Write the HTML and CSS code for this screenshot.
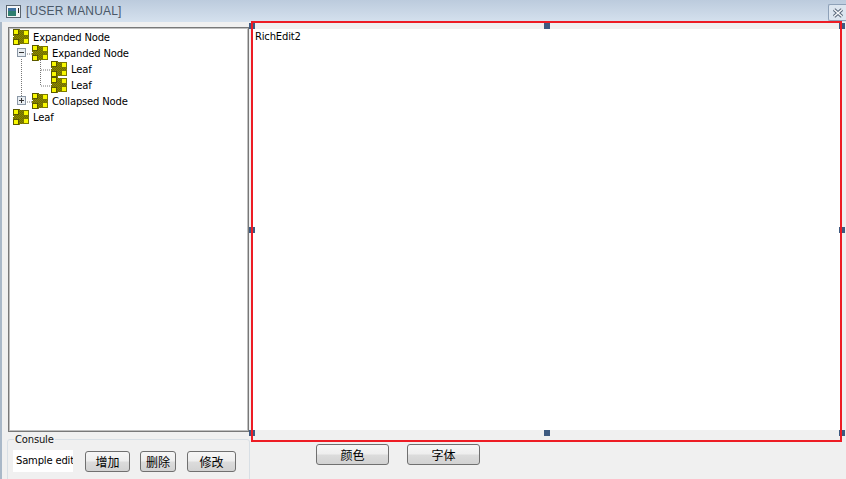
FILE: index.html
```html
<!DOCTYPE html>
<html lang="zh">
<head>
<meta charset="utf-8">
<title>[USER MANUAL]</title>
<link rel="stylesheet" href="styles.css">
</head>
<body>
<svg class="defs" width="0" height="0" aria-hidden="true">
  <defs>
    <pattern id="dither" width="2" height="2" patternUnits="userSpaceOnUse">
      <rect width="2" height="2" fill="#8c8800"/>
      <rect width="1" height="1" fill="#6e6c00"/>
      <rect x="1" y="1" width="1" height="1" fill="#6e6c00"/>
    </pattern>
    <symbol id="node" viewBox="0 0 16 16">
      <path d="M0 0h7v1h7v1h2v13H7v1H0V8h1V7H0z" fill="url(#dither)"/>
      <rect x="0.5" y="0.5" width="5" height="5" fill="#f8f800" stroke="#5a5800"/>
      <rect x="10.5" y="1.5" width="5" height="5" fill="#f8f800" stroke="#7a7800"/>
      <rect x="0.5" y="10.5" width="5" height="5" fill="#f8f800" stroke="#5a5800"/>
      <rect x="10.5" y="9.5" width="5" height="5" fill="#f8f800" stroke="#7a7800"/>
    </symbol>
  </defs>
</svg>
<div class="window">
  <header class="titlebar">
    <svg class="appicon" width="15" height="13" viewBox="0 0 15 13">
      <rect x="0.5" y="0.5" width="14" height="12" fill="#f4f6f8" stroke="#5a6570"/>
      <rect x="2" y="3" width="8" height="8" fill="#2f7f70"/>
      <rect x="2" y="3" width="8" height="3" fill="#3d6f9e"/>
      <rect x="12" y="3" width="1" height="5" fill="#222"/>
    </svg>
    <span class="title">[USER MANUAL]</span>
    <button class="close" type="button" aria-label="Close">
      <svg width="12" height="10" viewBox="0 0 12 10">
        <path d="M2 1.5l8 7M10 1.5l-8 7" stroke="#59677a" stroke-width="3.6" fill="none"/>
        <path d="M2 1.5l8 7M10 1.5l-8 7" stroke="#f6f8fa" stroke-width="1.6" fill="none"/>
      </svg>
    </button>
  </header>
  <div class="content">
    <aside class="left">
      <div class="tree">
        <svg class="guides" width="60" height="90" viewBox="0 0 60 90">
          <path d="M12.5 31V70M31.5 32V58M32 42h10M32 58h10M18 26h5M18 74h5" stroke="#777" stroke-dasharray="1 1" fill="none"/>
        </svg>
        <div class="node"><svg class="ic"><use href="#node"/></svg><span>Expanded Node</span></div>
        <div class="node lvl1">
          <span class="exp"><svg width="9" height="9" viewBox="0 0 9 9"><path d="M2 4.5h5" stroke="#333"/></svg></span>
          <svg class="ic"><use href="#node"/></svg><span>Expanded Node</span>
        </div>
        <div class="node lvl2"><svg class="ic"><use href="#node"/></svg><span>Leaf</span></div>
        <div class="node lvl2"><svg class="ic"><use href="#node"/></svg><span>Leaf</span></div>
        <div class="node lvl1">
          <span class="exp"><svg width="9" height="9" viewBox="0 0 9 9"><path d="M2 4.5h5M4.5 2v5" stroke="#333"/></svg></span>
          <svg class="ic"><use href="#node"/></svg><span>Collapsed Node</span>
        </div>
        <div class="node"><svg class="ic"><use href="#node"/></svg><span>Leaf</span></div>
      </div>
      <fieldset class="group">
        <legend>Consule</legend>
        <div class="edit">Sample edit</div>
        <button class="btn b1" type="button">增加</button>
        <button class="btn b2" type="button">删除</button>
        <button class="btn b3" type="button">修改</button>
      </fieldset>
    </aside>
    <main class="right">
      <div class="design">
        <div class="rich"><div class="richtop"></div><div class="richbody">RichEdit2</div><div class="richbot"></div></div>
        <i class="h tl"></i><i class="h tc"></i><i class="h tr"></i>
        <i class="h ml"></i><i class="h mr"></i>
        <i class="h bl"></i><i class="h bc"></i><i class="h br"></i>
      </div>
      <div class="actions">
        <button class="btn wide" type="button">颜色</button>
        <button class="btn wide" type="button">字体</button>
      </div>
    </main>
  </div>
</div>
</body>
</html>
```
FILE: styles.css
```css
html, body { margin: 0; padding: 0; height: 479px; overflow: hidden; background: #f0f0f0; }
body { font-family: "DejaVu Sans", "Noto Sans CJK SC", sans-serif; font-size: 10px; letter-spacing: -0.18px; color: #000; }
.defs { position: absolute; }
.window { height: 479px; display: flex; flex-direction: column; overflow: hidden; }
.titlebar {
  height: 22px; display: flex; align-items: center; padding: 0 0 0 6px; flex: none;
  background: linear-gradient(to bottom, #bccbdd, #d5e1ee);
}
.appicon { flex: none; }
.title { margin-left: 5px; font: 12px "Liberation Sans", sans-serif; letter-spacing: 0.17px; color: #4a5868; }
.close {
  margin-left: auto; width: 18px; height: 17px; align-self: flex-start; margin-top: 4px; padding: 0 0 0 3px;
  border: 1px solid #8ea1b8; border-right: 0; border-radius: 2px 0 0 2px;
  background: #dde6f0; display: flex; align-items: center; justify-content: flex-start; overflow: hidden;
}
.close svg { flex: none; }
.content { flex: 1; display: flex; min-height: 0; border-left: 2px solid #a9b8c8; }
.left { width: 249px; flex: none; padding: 5px 0 0 6px; box-sizing: border-box; }
.tree {
  position: relative; width: 241px; height: 405px; box-sizing: border-box;
  background: #fff; border: 1px solid #787878; outline: 1px solid #c0c0c0; outline-offset: -2px;
  padding: 1px 0 0 4px;
}
.guides { position: absolute; left: 0; top: 0; }
.node { height: 16px; display: flex; align-items: center; position: relative; white-space: nowrap; }
.ic { width: 16px; height: 16px; flex: none; margin-right: 4px; }
.lvl1 { padding-left: 19px; }
.lvl2 { padding-left: 38px; }
.exp {
  position: absolute; left: 4px; top: 3px; width: 9px; height: 9px; box-sizing: border-box;
  border: 1px solid #8a97a5; background: #e8edf2; display: block;
}
.exp svg { display: block; margin: -1px; }
.group {
  margin: 0 0 0 -1px; padding: 0; width: 243px; height: 60px; box-sizing: border-box;
  border: 1px solid #d8dfe5; border-radius: 3px; position: relative;
  display: block;
}
.group legend { margin-left: 6px; padding: 2px 1px 0; line-height: 12px; color: #111; }
.edit {
  position: absolute; left: 5px; top: 4px; width: 60px; height: 22px; line-height: 21px;
  background: #fff; padding-left: 3px; box-sizing: border-box; overflow: hidden; white-space: nowrap;
}
.btn {
  height: 21px; padding: 0; border: 1px solid #707070; border-radius: 3px;
  background: linear-gradient(to bottom, #f6f6f6 0%, #eeeeee 48%, #dcdcdc 52%, #d2d2d2 100%);
  font: 12px "Noto Sans CJK SC", sans-serif; color: #000; line-height: 18px;
}
.b1, .b2, .b3 { position: absolute; top: 5px; }
.b1 { left: 77px; width: 45px; }
.b2 { left: 132px; width: 36px; }
.b3 { left: 179px; width: 49px; }
.right { flex: 1; min-width: 0; display: flex; flex-direction: column; }
.design { position: relative; width: 591px; height: 421px; margin-top: -1px; flex: none; box-sizing: border-box; background: #efefef; }
.design::after { content: ""; position: absolute; inset: 0; border: 2px solid #ed1c24; pointer-events: none; }
.rich { height: 100%; display: flex; flex-direction: column; padding: 2px; box-sizing: border-box; }
.richtop { height: 6px; background: #f0f0f0; flex: none; }
.richbody { flex: 1; background: #fff; padding: 2px 2px; line-height: 12px; }
.richbot { height: 10px; background: #f0f0f0; flex: none; }
.h { position: absolute; width: 6px; height: 6px; background: #3d5a80; }
.tl { left: -2px; top: 2px; } .tc { left: 293px; top: 2px; } .tr { left: 588px; top: 2px; }
.ml { left: -2px; top: 206px; } .mr { left: 588px; top: 206px; }
.bl { left: -2px; top: 409px; } .bc { left: 293px; top: 409px; } .br { left: 588px; top: 409px; }
.actions { display: flex; gap: 18px; padding: 2px 0 0 65px; }
.wide { width: 73px; }
```
